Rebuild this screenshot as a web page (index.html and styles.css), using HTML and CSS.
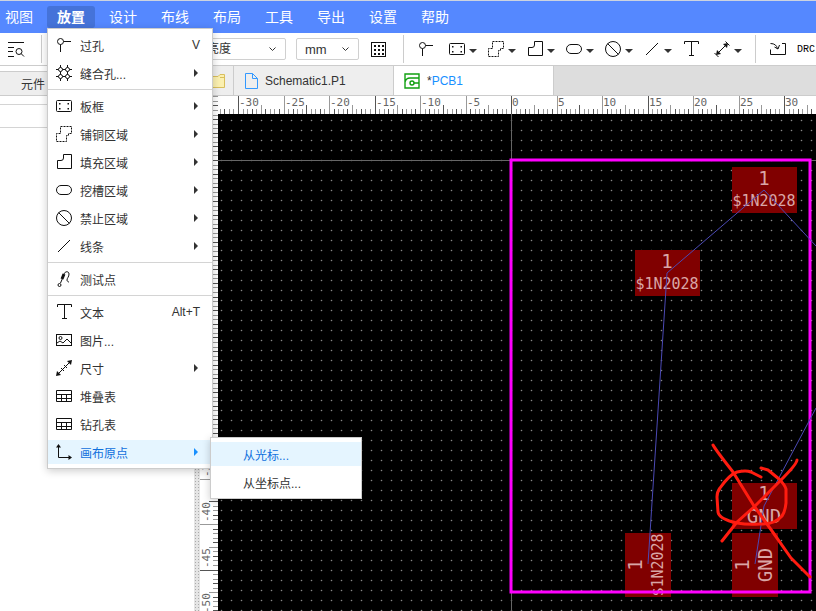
FILE: index.html
```html
<!DOCTYPE html>
<html lang="zh-CN">
<head>
  <meta charset="UTF-8" />
  <meta name="viewport" content="width=device-width, initial-scale=1" />
  <title>PCB1</title>
  <link rel="stylesheet" href="styles.css">
</head>
<body>
  <!-- Icon set -->
  <svg class="icon-set" aria-hidden="true">
    <symbol id="i-find" viewBox="0 0 18 18"><path d="M1 2.500h16M1 7.500h6M1 11.500h5M1 16.500h6"/><circle cx="12" cy="11.500" r="3"/><path d="M14 13.500l3 3"/></symbol>
    <symbol id="i-via" viewBox="0 0 18 18"><circle cx="5.500" cy="5.500" r="3"/><path d="M8.500 5.500H16M5.500 8.500V16"/></symbol>
    <symbol id="i-stitch" viewBox="0 0 18 18"><circle cx="5.500" cy="5.500" r="2"/><circle cx="12.500" cy="5.500" r="2"/><circle cx="5.500" cy="12.500" r="2"/><circle cx="12.500" cy="12.500" r="2"/><path d="M5.500 1v2.500M5.500 7.500v3M5.500 14.500V17M12.500 1v2.500M12.500 7.500v3M12.500 14.500V17M1 5.500h2.500M7.500 5.500h3M14.500 5.500H17M1 12.500h2.500M7.500 12.500h3M14.500 12.500H17"/></symbol>
    <symbol id="i-board" viewBox="0 0 18 18"><rect x="1.500" y="3.500" width="15" height="11" rx="1"/><path class="fill" d="M4 6h1.500v1.500H4zM12.500 6H14v1.500h-1.500zM4 11h1.500v1.500H4zM12.500 11H14v1.500h-1.500z"/></symbol>
    <symbol id="i-copper" viewBox="0 0 18 18"><path stroke-dasharray="2 1" d="M5.500 1.500h11v7h-3v2h-2v6h-10v-8h4z"/></symbol>
    <symbol id="i-fill" viewBox="0 0 18 18"><path d="M8.500 1.500h8v14h-14v-8h3.500q2.500 0 2.500-2.500z"/></symbol>
    <symbol id="i-slot" viewBox="0 0 18 18"><rect x="1.500" y="4.500" width="15" height="9" rx="4.500"/></symbol>
    <symbol id="i-ban" viewBox="0 0 18 18"><circle cx="9" cy="9" r="7.500"/><path d="M3.500 3.500l11 11"/></symbol>
    <symbol id="i-line" viewBox="0 0 18 18"><path d="M3 15L15 3"/></symbol>
    <symbol id="i-probe" viewBox="0 0 18 18"><circle cx="4.500" cy="15" r="1.500"/><path d="M5.500 13L9 5"/><path stroke-width="3" d="M7 9l2-5"/><path d="M9 4c1-3 5-3 5 0 0 3-2 4-2 6 0 1 1 2 2 2"/></symbol>
    <symbol id="i-text" viewBox="0 0 18 18"><path d="M2.500 4V1.500h14V4M9.500 1.500v14M7 15.500h5"/></symbol>
    <symbol id="i-image" viewBox="0 0 18 18"><rect x="1.500" y="3.500" width="15" height="11"/><circle cx="5.500" cy="7" r="1.500"/><path d="M2 12l3-2 3 2 4-4 4 4"/></symbol>
    <symbol id="i-dim" viewBox="0 0 18 18"><path d="M4 14L14 4M1.500 13l4 4M12.500 1.500l4 4"/><path class="fill" d="M3 15l1-5 4 4zM15 3l-5 1 4 4z"/></symbol>
    <symbol id="i-dim-dash" viewBox="0 0 18 18"><path d="M3 15l4-4M8 10l2-2M11 7l4-4M6 9l3 3M9 6l3 3"/><path class="fill" d="M1 17l1-5 4 4zM17 1l-5 1 4 4z"/></symbol>
    <symbol id="i-table" viewBox="0 0 18 18"><path d="M1.500 3.500h15v11h-15zM1.500 7.500h15M1.500 11.500h15M6.500 7.500v7M11.500 7.500v7"/></symbol>
    <symbol id="i-origin" viewBox="0 0 18 18"><path d="M3.500 3v11.500H15"/><path class="fill" d="M1 4.500L3.500 1 6 4.500zM13.500 12l3.500 2.500-3.500 2.500z"/></symbol>
    <symbol id="i-grid" viewBox="0 0 18 18"><rect x="2.500" y="2.500" width="14" height="14"/><path stroke-width="2" stroke-dasharray="2 2" d="M5 6h10M5 10h10M5 14h10"/></symbol>
    <symbol id="i-import" viewBox="0 0 18 18"><path d="M13 3.500h3.500v11h-15v-5M1.500 3.500q6 0 7 5.500M5.500 7l3.500 2 1.500-4"/></symbol>
  </svg>

  <nav class="menubar">
    <button>视图</button>
    <div class="menu-holder">
      <button class="active">放置</button>
      <div class="menu">
        <button><svg class="icon"><use href="#i-via"/></svg>过孔<span class="key">V</span></button>
        <button><svg class="icon"><use href="#i-stitch"/></svg>缝合孔...<i class="arrow"></i></button>
        <hr>
        <button><svg class="icon"><use href="#i-board"/></svg>板框<i class="arrow"></i></button>
        <button><svg class="icon"><use href="#i-copper"/></svg>铺铜区域<i class="arrow"></i></button>
        <button><svg class="icon"><use href="#i-fill"/></svg>填充区域<i class="arrow"></i></button>
        <button><svg class="icon"><use href="#i-slot"/></svg>挖槽区域<i class="arrow"></i></button>
        <button><svg class="icon"><use href="#i-ban"/></svg>禁止区域<i class="arrow"></i></button>
        <button><svg class="icon"><use href="#i-line"/></svg>线条<i class="arrow"></i></button>
        <hr>
        <button><svg class="icon"><use href="#i-probe"/></svg>测试点</button>
        <hr>
        <button><svg class="icon"><use href="#i-text"/></svg>文本<span class="key">Alt+T</span></button>
        <button><svg class="icon"><use href="#i-image"/></svg>图片...</button>
        <button><svg class="icon"><use href="#i-dim-dash"/></svg>尺寸<i class="arrow"></i></button>
        <button><svg class="icon"><use href="#i-table"/></svg>堆叠表</button>
        <button><svg class="icon"><use href="#i-table"/></svg>钻孔表</button>
        <div class="menu-holder">
          <button class="selected"><svg class="icon"><use href="#i-origin"/></svg>画布原点<i class="arrow"></i></button>
          <div class="menu submenu">
            <button class="selected">从光标...</button>
            <button>从坐标点...</button>
          </div>
        </div>
      </div>
    </div>
    <button>设计</button>
    <button>布线</button>
    <button>布局</button>
    <button>工具</button>
    <button>导出</button>
    <button>设置</button>
    <button>帮助</button>
  </nav>

  <div class="toolbar">
    <button class="tool plain" aria-label="查找"><svg class="icon"><use href="#i-find"/></svg></button>
    <span class="sep"></span>
    <select class="display" aria-label="亮度"><option>亮度</option></select>
    <select class="unit" aria-label="单位"><option>mm</option></select>
    <button class="tool plain" aria-label="网格"><svg class="icon"><use href="#i-grid"/></svg></button>
    <span class="sep"></span>
    <button class="tool plain" aria-label="过孔"><svg class="icon"><use href="#i-via"/></svg></button>
    <button class="tool" aria-label="板框"><svg class="icon"><use href="#i-board"/></svg><i class="caret"></i></button>
    <button class="tool" aria-label="铺铜区域"><svg class="icon"><use href="#i-copper"/></svg><i class="caret"></i></button>
    <button class="tool" aria-label="填充区域"><svg class="icon"><use href="#i-fill"/></svg><i class="caret"></i></button>
    <button class="tool" aria-label="挖槽区域"><svg class="icon"><use href="#i-slot"/></svg><i class="caret"></i></button>
    <button class="tool" aria-label="禁止区域"><svg class="icon"><use href="#i-ban"/></svg><i class="caret"></i></button>
    <button class="tool" aria-label="线条"><svg class="icon"><use href="#i-line"/></svg><i class="caret"></i></button>
    <button class="tool plain" aria-label="文本"><svg class="icon"><use href="#i-text"/></svg></button>
    <button class="tool" aria-label="尺寸"><svg class="icon"><use href="#i-dim"/></svg><i class="caret"></i></button>
    <span class="sep"></span>
    <button class="tool" aria-label="导入变更"><svg class="icon"><use href="#i-import"/></svg></button>
    <button class="tool drc">DRC</button>
  </div>

  <div class="content">
    <aside class="side">
      <div class="side-tabs"><button>元件</button></div>
      <div class="side-filter"></div>
    </aside>
    <div class="splitter"></div>

    <main class="editor">
      <div class="tabs">
        <button class="tab home" aria-label="工程">
          <svg width="18" height="16" viewBox="0 0 18 16"><path d="M1 14.500v-11h9l2-2h4.500v13z" fill="#fbf0b0" stroke="#d9bf5c"/><path d="M12 4.500h4.500" stroke="#d9bf5c"/></svg>
        </button>
        <button class="tab">
          <svg width="13" height="16" viewBox="0 0 13 16"><path d="M.5.500h7l5 5v10H.5zM7.500.500v5h5" fill="none" stroke="#3399ff"/></svg>
          Schematic1.P1
        </button>
        <button class="tab current">
          <svg width="16" height="16" viewBox="0 0 16 16"><path d="M1 1h14v14H1zM1 9q1-4 5-4h9M10 10h5" fill="none" stroke="#11a011" stroke-width="1.400"/><circle cx="8" cy="10" r="2" fill="none" stroke="#11a011" stroke-width="1.400"/></svg>
          <span><span class="dirty">*</span>PCB1</span>
        </button>
      </div>

      <div class="workspace">
        <svg class="ruler-v" id="ruler-v"></svg>
        <svg class="ruler-h" id="ruler-h"></svg>
        <svg class="canvas">
          <defs>
            <pattern id="dots" x="-1" y="-1" width="10" height="10" patternUnits="userSpaceOnUse">
              <circle cx="1.500" cy="1.500" r=".8" fill="#888"/>
            </pattern>
          </defs>
          <g transform="translate(293 46)">
            <rect x="-300" y="-50" width="4000" height="3000" fill="url(#dots)"/>
            <path class="axis" d="M-300 .5H4000M.5-50V3000"/>
            <g class="pads">
              <rect x="221" y="7" width="65" height="46"/>
              <rect x="124" y="90" width="65" height="46"/>
              <rect x="114" y="373" width="46" height="64"/>
              <rect x="221" y="323" width="65" height="46"/>
              <rect x="221" y="373" width="46" height="64"/>
            </g>
            <g class="pad-text">
              <text class="num" x="253" y="25">1</text><text x="253" y="46">$1N2028</text>
              <text class="num" x="156" y="108">1</text><text x="156" y="129">$1N2028</text>
              <text class="num" x="253" y="340">1</text><text class="num" x="253" y="363">GND</text>
              <text class="num" transform="translate(131 405) rotate(-90)">1</text>
              <text transform="translate(152 405) rotate(-90)">$1N2028</text>
              <text class="num" transform="translate(238 405) rotate(-90)">1</text>
              <text class="num" transform="translate(261 405) rotate(-90)">GND</text>
            </g>
            <rect class="outline" x="0" y="0" width="299" height="432"/>
            <path class="ratline" d="M137 404L156 113 253 30 305 86M244 404L253 346 305 248"/>
            <!-- hand-drawn mark -->
            <g class="mark">
              <path d="M202 285Q204 289 222 312L243 346 261 371 280 398Q287 405 299 417"/>
              <path d="M286 300Q286 304 269 321L243 347 226 362 211 381"/>
              <path d="M250 317L240 312Q235 310 226 312 218 315 209 328 206 332 206 337L207 352Q208 359 226 363 237 365 249 364 263 365 271 356 274 352 275 343V329Q274 325 268 319L257 310 250 308"/>
            </g>
          </g>
        </svg>
      </div>
    </main>
  </div>

  <script>
    const NS = 'http://www.w3.org/2000/svg';
    const STEP = 4.55; // pixels per tick

    function add(parent, tag, attrs, text) {
      const el = document.createElementNS(NS, tag);
      for (const key in attrs) el.setAttribute(key, attrs[key]);
      if (text !== undefined) el.textContent = text;
      parent.appendChild(el);
    }

    function drawRuler(id, vertical, origin) {
      const ruler = document.getElementById(id);
      const box = ruler.getBoundingClientRect();
      const length = vertical ? box.height : box.width;
      const first = Math.ceil(-origin / STEP);
      const last = Math.floor((length - origin) / STEP);

      // one extra tick past the end, so its label can start inside
      for (let i = first; i <= last + 1; i++) {
        const pos = Math.round(origin + i * STEP);
        const major = i % 10 === 0;
        const start = major ? 0 : i % 5 === 0 ? 9 : 13;
        const fill = i % 3 === 0 ? '#555' : '#999';
        if (vertical) {
          add(ruler, 'rect', { x: start, y: pos, width: 18 - start, height: 1, fill: fill });
          if (major) add(ruler, 'text', { transform: `translate(10 ${pos - 2}) rotate(-90)` }, -i / 2);
        } else {
          add(ruler, 'rect', { x: pos, y: start, width: 1, height: 18 - start, fill: fill });
          if (major) add(ruler, 'text', { x: pos + 1, y: 10 }, i / 2);
        }
      }
    }

    drawRuler('ruler-h', false, 293);
    drawRuler('ruler-v', true, 64);
  </script>
</body>
</html>
```
FILE: styles.css
```css
* {
  box-sizing: border-box;
}

body {
  margin: 0;
  height: 100vh;
  display: flex;
  flex-direction: column;
  overflow: hidden;
  font-family: "Liberation Sans", "Noto Sans CJK SC", sans-serif;
  font-size: 12px;
  color: #333;
  background: #fff;
}

button, select {
  font: inherit;
  color: inherit;
  background: none;
  border: none;
  padding: 0;
  margin: 0;
  white-space: nowrap;
}

.icon-set {
  display: none;
}

.icon {
  width: 18px;
  height: 18px;
  flex: none;
  fill: none;
  stroke: #111;
}

symbol .fill {
  fill: #111;
  stroke: none;
}

/* Menu bar */
.menubar {
  display: flex;
  gap: 4px;
  flex: none;
  height: 33px;
  margin-left: -5px;
  padding: 5px 0;
  border-top: 1px solid #ccd3e0;
  background: #5588ff;
}

.menubar > button, .menubar > .menu-holder > button {
  height: 22px;
  padding: 0 10px;
  border-radius: 3px;
  font-size: 14px;
  line-height: 22px;
  color: #fff;
}

.menubar .active {
  background: #4573d9;
  font-weight: bold;
}

.menu-holder {
  position: relative;
}

.menu {
  position: absolute;
  top: 22px;
  left: 0;
  z-index: 10;
  display: flex;
  flex-direction: column;
  width: 166px;
  padding: 2px 0;
  border: 1px solid #ccc;
  background: #fff;
  box-shadow: 0 2px 8px rgba(0, 0, 0, 0.2);
}

.menu .menu-holder {
  display: flex;
  flex-direction: column;
}

.menu button {
  display: flex;
  align-items: center;
  height: 24px;
  margin: 2px 0;
  padding: 0 12px 0 7px;
}

.menu .icon {
  margin-right: 7px;
}

.menu hr {
  width: 100%;
  height: 1px;
  margin: 2px 0;
  border: none;
  background: #d4d4d4;
}

.menu .selected {
  background: #e5f5ff;
  color: #1070dd;
}

.key {
  margin-left: auto;
}

.arrow {
  margin-left: auto;
  margin-right: 2px;
  border: 4px solid transparent;
  border-left-color: #333;
  border-right: none;
}

.selected .arrow {
  border-left-color: #1890ff;
}

.submenu {
  top: -1px;
  left: 162px;
  width: 152px;
}

.menu .submenu button {
  padding-left: 32px;
}

/* Toolbar */
.toolbar {
  display: flex;
  align-items: center;
  gap: 10px;
  flex: none;
  height: 33px;
  padding-left: 7px;
  border-bottom: 1px solid #ccc;
}

.tool {
  display: flex;
  align-items: center;
  gap: 3px;
  flex: none;
}

.plain {
  padding-right: 3px;
}

.drc {
  font-family: "Liberation Mono", monospace;
  font-size: 10px;
  color: #000;
}

.caret {
  margin-top: 3px;
  border: 4px solid transparent;
  border-top-color: #333;
  border-bottom: none;
}

.sep {
  flex: none;
  width: 1px;
  height: 28px;
  margin: 0 3px;
  background: #ccc;
}

.toolbar select {
  flex: none;
  height: 22px;
  padding-left: 8px;
  border: 1px solid #d0d0d0;
  border-radius: 2px;
  appearance: none;
  background: url("data:image/svg+xml,%3Csvg xmlns='http://www.w3.org/2000/svg' width='7' height='5'%3E%3Cpath d='M.5.5l3 3 3-3' fill='none' stroke='%23333'/%3E%3C/svg%3E") no-repeat right 9px center;
}

.toolbar .display {
  width: 88px;
  margin-left: 143px;
}

.toolbar .unit {
  width: 63px;
  font-size: 13px;
}

/* Side panel */
.content {
  display: grid;
  grid-template-columns: 194px 6px minmax(0, 1fr);
  flex: 1;
  min-height: 0;
}

.side-tabs {
  display: flex;
  margin-top: 5px;
  border: 1px solid #ccc;
  border-width: 1px 0;
  background: #eee;
}

.side-tabs button {
  height: 23px;
  padding: 0 21px;
}

.side-filter {
  height: 24px;
  margin-top: 8px;
  border: 1px solid #d4d4d4;
  border-width: 1px 0;
}

.splitter {
  background: radial-gradient(circle, #aaa 1px, #e4e4e4 1px) 0 0 / 3px 3px;
}

/* Editor */
.editor {
  display: flex;
  flex-direction: column;
  min-height: 0;
}

.tabs {
  display: flex;
  flex: none;
  height: 30px;
  border-bottom: 1px solid #ccc;
  background: #ddd;
}

.tab {
  display: flex;
  align-items: center;
  gap: 7px;
  width: 160px;
  padding-left: 11px;
  border-right: 1px solid #ccc;
  background: #eee;
}

.home {
  width: 34px;
  padding-left: 8px;
}

.current {
  padding-left: 10px;
  background: #fff;
  color: #1890ff;
}

.dirty {
  color: #333;
}

.workspace {
  display: grid;
  grid-template-columns: 18px minmax(0, 1fr);
  grid-template-rows: 18px minmax(0, 1fr);
  flex: 1;
  min-height: 0;
}

.ruler-h, .ruler-v {
  width: 100%;
  height: 100%;
  font-family: "DejaVu Sans Mono", monospace;
  font-size: 11px;
  fill: #666;
}

.ruler-v {
  grid-row: 1 / 3;
}

.canvas {
  width: 100%;
  height: 100%;
  background: #000;
}

.axis {
  stroke: #666;
}

.pads {
  fill: #800000;
}

.pad-text {
  fill: #d9a6a6;
  font-family: "DejaVu Sans Mono", monospace;
  font-size: 15px;
  text-anchor: middle;
}

.pad-text .num {
  font-size: 19px;
}

.outline {
  fill: none;
  stroke: #ff00ff;
  stroke-width: 3px;
}

.ratline {
  fill: none;
  stroke: #4b49b5;
}

.mark {
  fill: none;
  stroke: #ff1c10;
  stroke-width: 3px;
  stroke-linecap: round;
  stroke-linejoin: round;
}
```
